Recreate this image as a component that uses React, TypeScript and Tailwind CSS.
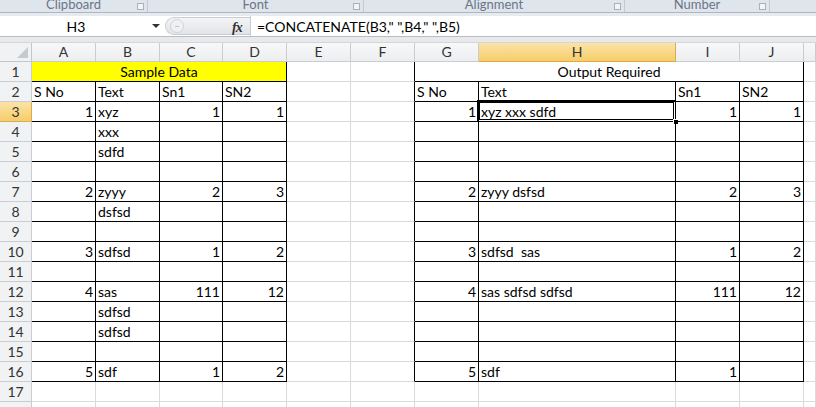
import React from 'react';

const colLetters = ['A', 'B', 'C', 'D', 'E', 'F', 'G', 'H', 'I', 'J', ''];

const leftData: Record<number, string[]> = {
  2: ['S No', 'Text', 'Sn1', 'SN2'],
  3: ['1', 'xyz', '1', '1'],
  4: ['', 'xxx', '', ''],
  5: ['', 'sdfd', '', ''],
  7: ['2', 'zyyy', '2', '3'],
  8: ['', 'dsfsd', '', ''],
  10: ['3', 'sdfsd', '1', '2'],
  12: ['4', 'sas', '111', '12'],
  13: ['', 'sdfsd', '', ''],
  14: ['', 'sdfsd', '', ''],
  16: ['5', 'sdf', '1', '2'],
};

const rightData: Record<number, string[]> = {
  2: ['S No', 'Text', 'Sn1', 'SN2'],
  3: ['1', 'xyz xxx sdfd', '1', '1'],
  7: ['2', 'zyyy dsfsd', '2', '3'],
  10: ['3', 'sdfsd  sas', '1', '2'],
  12: ['4', 'sas sdfsd sdfsd', '111', '12'],
  16: ['5', 'sdf', '1', ''],
};

function cellValue(row: number, col: number): string {
  if (col <= 3) return leftData[row]?.[col] ?? '';
  if (col >= 6 && col <= 9) return rightData[row]?.[col - 6] ?? '';
  return '';
}

function RibbonGroup({ label, width, last }: { label: string; width: string; last?: boolean }) {
  return (
    <div className={`${width} relative h-full flex justify-center ${last ? '' : 'border-r border-[#c4cad3]'}`}>
      <span className="text-[13px] leading-[13px] -mt-[2px] text-[#6b7586]">{label}</span>
      {!last && (
        <span className="absolute right-[3px] top-[3px] w-[7px] h-[7px] border border-[#a9b1bc] bg-[#f2f4f7]" />
      )}
    </div>
  );
}

function Cell({ row, col }: { row: number; col: number }) {
  const inTable = row >= 1 && row <= 16;
  const left = col <= 3;
  const right = col >= 6 && col <= 9;
  const blackRight = inTable && (row >= 2 ? left || right || col === 5 : col === 5);
  const blackBottom = inTable && (left || right);
  const value = cellValue(row, col);
  const isNum = /^\d+$/.test(value);
  const selected = row === 3 && col === 7;

  return (
    <div
      className={`relative h-[20px] border-b border-r px-[2px] text-[14px] leading-[20px] text-black whitespace-pre overflow-visible ${
        isNum ? 'text-right' : 'text-left'
      } ${blackRight ? 'border-r-black' : 'border-r-[#dadada]'} ${blackBottom ? 'border-b-black' : 'border-b-[#dadada]'}`}
    >
      {value}
      {selected && (
        <>
          <div className="absolute -left-[2px] -top-[2px] -right-[1px] -bottom-[1px] border border-black">
            <div className="absolute inset-[1px] border border-black" />
          </div>
          <div className="absolute -right-[4px] -bottom-[4px] w-[6px] h-[6px] bg-black border border-white" />
        </>
      )}
    </div>
  );
}

export default function App() {
  const rows = Array.from({ length: 17 }, (_, i) => i + 2);

  return (
    <div className="w-[816px] h-[407px] overflow-hidden bg-white font-['Lato','Open_Sans',sans-serif] flex flex-col">
      {/* ribbon group labels */}
      <div className="shrink-0 h-[13px] flex bg-[#dfe5ed] border-b border-[#aeb6c1] overflow-hidden">
        <RibbonGroup label="Clipboard" width="w-[148px]" />
        <RibbonGroup label="Font" width="w-[216px]" />
        <RibbonGroup label="Alignment" width="w-[261px]" />
        <RibbonGroup label="Number" width="w-[145px]" />
        <div className="flex-1" />
      </div>
      <div className="shrink-0 h-[3px] bg-[#e7ebf0]" />

      {/* formula bar */}
      <div className="shrink-0 h-[21px] flex items-center bg-white border-b border-[#b9bec6]">
        <div className="w-[165px] h-full flex items-center relative">
          <span className="w-[152px] text-center text-[14px] text-black">H3</span>
          <span className="absolute left-[152px] top-[8px] w-0 h-0 border-l-[4px] border-r-[4px] border-t-[4px] border-l-transparent border-r-transparent border-t-[#333]" />
        </div>
        <div className="w-[85px] h-[18px] flex items-center rounded-l-full border border-r-0 border-[#c9cdd3] bg-gradient-to-b from-[#f3f4f6] to-[#e1e4e8] relative">
          <span className="ml-[4px] w-[14px] h-[14px] rounded-full border border-[#cfd3d8] bg-[#eef0f2] flex items-center justify-center">
            <span className="w-[4px] h-[1px] bg-[#c0c4ca]" />
          </span>
          <span className="absolute left-[66px] top-[-1px] font-['Liberation_Serif',serif] italic font-bold text-[14px] text-[#333] tracking-[-1px]">
            fx
          </span>
        </div>
        <div className="w-[1px] h-full bg-[#c9cdd3]" />
        <span className="ml-[6px] text-[14px] text-black whitespace-pre">=CONCATENATE(B3," ",B4," ",B5)</span>
      </div>
      <div className="shrink-0 h-[6px] bg-[#e8e9eb] border-b border-[#d3d6da]" />

      {/* sheet */}
      <div className="shrink-0 grid grid-cols-[32px_64px_64px_63px_64px_64px_64px_64px_197px_64px_64px_12px]">
        {/* column headers */}
        <div className="h-[19px] bg-[#f1f2f4] border-r border-b border-[#c3c6cb] relative">
          <span className="absolute right-[3px] bottom-[3px] w-0 h-0 border-r-[11px] border-t-[11px] border-t-transparent border-r-[#c6c9cd]" />
        </div>
        {colLetters.map((c, i) =>
          i === 7 ? (
            <div
              key={c + i}
              className="h-[19px] bg-gradient-to-b from-[#fbe3a6] to-[#f6cd68] border-r border-b border-r-[#d5ad58] border-b-[#e3a941] text-center text-[14px] leading-[18px] text-[#333]"
            >
              {c}
            </div>
          ) : (
            <div
              key={c + i}
              className="h-[19px] bg-gradient-to-b from-[#f8f8f9] to-[#eceef0] border-r border-b border-[#c9ccd0] text-center text-[14px] leading-[18px] text-[#333]"
            >
              {c}
            </div>
          )
        )}

        {/* row 1 */}
        <div className="h-[20px] bg-[#f1f2f4] border-r border-b border-[#c9ccd0] text-center text-[14px] leading-[20px] text-[#333]">
          1
        </div>
        <div className="col-span-4 h-[20px] bg-[#ffff00] border-r border-b border-black text-center text-[14px] leading-[20px] text-black">
          Sample Data
        </div>
        <div className="h-[20px] border-r border-b border-r-[#dadada] border-b-[#dadada]" />
        <div className="h-[20px] border-r border-b border-r-black border-b-[#dadada]" />
        <div className="col-span-4 h-[20px] border-r border-b border-black text-center text-[14px] leading-[20px] text-black">
          Output Required
        </div>
        <div className="h-[20px] border-r border-b border-[#dadada]" />

        {rows.map((r) => (
          <React.Fragment key={r}>
            {r === 3 ? (
              <div className="h-[20px] bg-gradient-to-b from-[#fbe3a6] to-[#f6cd68] border-r border-b border-r-[#e3a941] border-b-[#d5ad58] text-center text-[14px] leading-[20px] text-[#333]">
                {r}
              </div>
            ) : (
              <div className="h-[20px] bg-[#f1f2f4] border-r border-b border-[#c9ccd0] text-center text-[14px] leading-[20px] text-[#333]">
                {r}
              </div>
            )}
            {colLetters.map((_, c) => (
              <Cell key={c} row={r} col={c} />
            ))}
          </React.Fragment>
        ))}
      </div>
    </div>
  );
}
